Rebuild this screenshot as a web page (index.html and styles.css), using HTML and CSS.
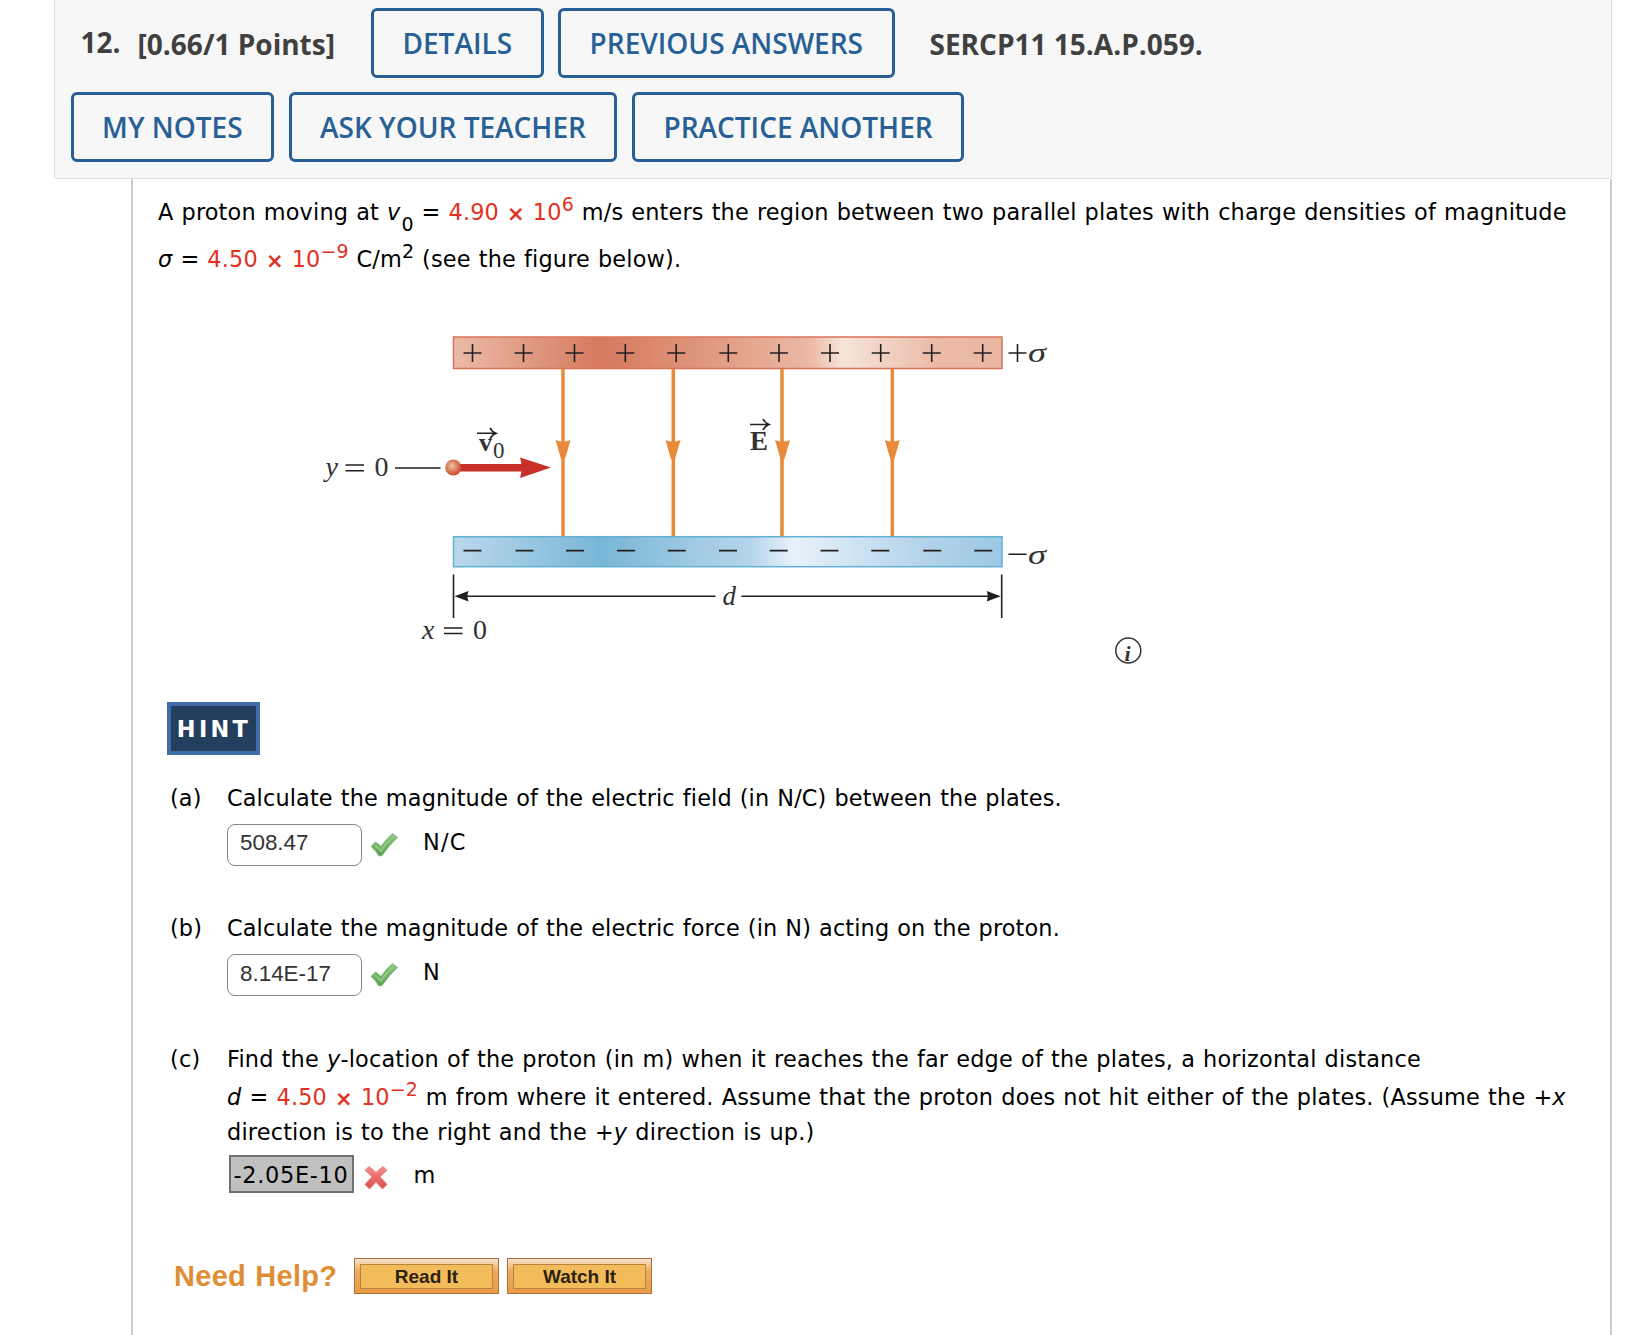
FILE: index.html
```
<!DOCTYPE html>
<html lang="en">
	<head>
		<meta charset="UTF-8">
		<meta name="viewport" content="width=device-width, initial-scale=1">
		<title>SERCP11 15.A.P.059.</title>
		<link rel="stylesheet" href="styles.css">
	</head>
	<body>
		<header class="question-header">
			<div class="header-row">
				<span class="number">12.</span>
				<span class="points">[0.66/1 Points]</span>
				<button class="btn">DETAILS</button>
				<button class="btn">PREVIOUS ANSWERS</button>
				<span class="code">SERCP11 15.A.P.059.</span>
			</div>
			<div class="header-row">
				<button class="btn">MY NOTES</button>
				<button class="btn">ASK YOUR TEACHER</button>
				<button class="btn">PRACTICE ANOTHER</button>
			</div>
		</header>

		<main class="question">
			<p class="intro">A proton moving at <i>v</i><sub>0</sub> = <span class="rand">4.90 <b>×</b> 10<sup>6</sup></span> m/s enters the region between two parallel plates with charge densities of magnitude<br>
			<i>σ</i> = <span class="rand">4.50 <b>×</b> 10<sup>−9</sup></span> C/m<sup>2</sup> (see the figure below).</p>

			<svg class="figure" viewBox="158 282 1000 388" width="1000" height="388">
				<defs>
					<linearGradient id="positive">
						<stop offset="0" stop-color="#ebbba7"/>
						<stop offset=".27" stop-color="#d6795f"/>
						<stop offset=".45" stop-color="#df967c"/>
						<stop offset=".65" stop-color="#ebb9a5"/>
						<stop offset=".71" stop-color="#f6e4db"/>
						<stop offset=".88" stop-color="#ebbba7"/>
						<stop offset="1" stop-color="#e9b7a2"/>
					</linearGradient>
					<linearGradient id="negative">
						<stop offset="0" stop-color="#bbd8ec"/>
						<stop offset=".27" stop-color="#78b6d6"/>
						<stop offset=".45" stop-color="#a2cbe4"/>
						<stop offset=".54" stop-color="#b4d4ea"/>
						<stop offset=".62" stop-color="#e8f2fa"/>
						<stop offset=".85" stop-color="#b4d4ea"/>
						<stop offset="1" stop-color="#9cc8e3"/>
					</linearGradient>
					<radialGradient id="proton" cx=".42" cy=".4" r=".6">
						<stop offset="0" stop-color="#f4c6b2"/>
						<stop offset=".5" stop-color="#df8264"/>
						<stop offset="1" stop-color="#c84b32"/>
					</radialGradient>
				</defs>

				<!-- plates -->
				<rect x="453.5" y="337" width="548.5" height="31.5" fill="url(#positive)" stroke="#d97358" stroke-width="1.5"/>
				<rect x="453.5" y="536.7" width="548.5" height="30" fill="url(#negative)" stroke="#62b0d4" stroke-width="1.5"/>
				<path class="ink" d="M463.5 353h18m-9-9v18M514.5 353h18m-9-9v18M565.5 353h18m-9-9v18M616.3 353h18m-9-9v18M667.2 353h18m-9-9v18M719.3 353h18m-9-9v18M770 353h18m-9-9v18M821 353h18m-9-9v18M871.7 353h18m-9-9v18M922.7 353h18m-9-9v18M973.7 353h18m-9-9v18M1008.5 353h18m-9-9v18"/>
				<path class="ink" d="M463.5 550.6h18M515.5 550.6h18M566 550.6h18M617 550.6h18M667.7 550.6h18M719 550.6h18M769.7 550.6h18M820.5 550.6h18M871.3 550.6h18M923.3 550.6h18M974.3 550.6h18M1008.5 554.3h18"/>

				<!-- field lines -->
				<path class="field" d="M563 369v167M673.3 369v167M782 369v167M892.3 369v167"/>
				<path fill="#e88a3a" d="M555.5 440q7.5 3 15 0l-5.5 19h-4zM665.5 440q7.5 3 15 0l-5.5 19h-4zM775 440q7.5 3 15 0l-5.5 19h-4zM884.8 440q7.5 3 15 0l-5.5 19h-4z"/>

				<!-- proton -->
				<path class="ink" d="M395 468h45.5"/>
				<path fill="#c9302c" d="M458 464h63.5l-1.5-6.5 31 10-31 10.5 1.5-6.5h-63.5z"/>
				<circle cx="453.3" cy="467.5" r="8" fill="url(#proton)"/>
				<path class="ink" d="M477 433.3h19m-6-5.5q2 4 6 5.5q-4 1.5-6 5.5"/>
				<path class="ink" d="M750 424.5h19m-6-5.5q2 4 6 5.5q-4 1.5-6 5.5"/>

				<!-- dimension line -->
				<path class="ink" d="M453.5 574.5v43.5M1001.7 574.5v43.5M458 596.3h257.5M741.5 596.3h256"/>
				<path fill="#231f20" d="M454.5 596.3l14-5.3q-2 5.3 0 10.6zM1000.7 596.3l-14-5.3q2 5.3 0 10.6z"/>

				<g class="labels">
					<text x="325.5" y="476" font-style="italic">y</text>
					<text x="374.5" y="476">0</text>
					<text x="422" y="639" font-style="italic">x</text>
					<text x="473" y="639">0</text>
					<text x="479" y="451" font-weight="bold" font-size="26">v</text>
					<text x="493" y="458" font-size="23">0</text>
					<text x="750" y="450" font-weight="bold" font-size="27">E</text>
					<text x="722.5" y="604.5" font-style="italic" font-size="27">d</text>
					<text x="1028" y="362" font-style="italic" font-size="27" textLength="18" lengthAdjust="spacingAndGlyphs">σ</text>
					<text x="1028" y="564" font-style="italic" font-size="27" textLength="18" lengthAdjust="spacingAndGlyphs">σ</text>
				</g>
				<path class="ink" d="M345.5 465h18.5M345.5 470.7h18.5M444 628h18.5M444 633.5h18.5"/>

				<!-- info -->
				<circle cx="1128.3" cy="650.5" r="12.5" fill="none" stroke="#333" stroke-width="1.5"/>
				<text class="info" x="1124.5" y="661">i</text>
			</svg>

			<button class="hint">HINT</button>

			<section class="part">
				<span>(a)</span>
				<div>
					<p>Calculate the magnitude of the electric field (in N/C) between the plates.</p>
					<div class="answer">
						<input class="box" type="text" value="508.47" aria-label="Part a">
						<svg class="mark" viewBox="0 0 28 24" width="28" height="24"><use href="#check"/></svg>
						<span class="unit">N/C</span>
					</div>
				</div>
			</section>

			<section class="part">
				<span>(b)</span>
				<div>
					<p>Calculate the magnitude of the electric force (in N) acting on the proton.</p>
					<div class="answer">
						<input class="box" type="text" value="8.14E-17" aria-label="Part b">
						<svg class="mark" viewBox="0 0 28 24" width="28" height="24"><use href="#check"/></svg>
						<span class="unit">N</span>
					</div>
				</div>
			</section>

			<section class="part part-c">
				<span>(c)</span>
				<div>
					<p>Find the <i>y</i>-location of the proton (in m) when it reaches the far edge of the plates, a horizontal distance</p>
					<p class="second"><i>d</i> = <span class="rand">4.50 <b>×</b> 10<sup>−2</sup></span> m from where it entered. Assume that the proton does not hit either of the plates. (Assume the +<i>x</i><br>
					direction is to the right and the +<i>y</i> direction is up.)</p>
					<div class="answer wrong">
						<span class="graded">-2.05E-10</span>
						<svg class="cross" viewBox="0 0 24 25" width="24" height="25">
							<defs>
								<linearGradient id="red" x2="0" y2="1">
									<stop offset="0" stop-color="#f0908d"/>
									<stop offset="1" stop-color="#e04b4a"/>
								</linearGradient>
							</defs>
							<path fill="url(#red)" stroke="#ec8482" stroke-linejoin="round" d="M5 1.5q4 2.500 7 6 3-3.500 7-6l4 4q-4 2.500-7 6.500 4 3.500 7 7.500l-4.500 4.500q-3.500-3.500-6.500-7-3 3.500-6.500 7l-4.500-4.500q3-4 7-7.500-3-4-7-6.500z"/>
						</svg>
						<span>m</span>
					</div>
				</div>
			</section>

			<div class="help">
				<span class="need">Need Help?</span>
				<button class="gold"><span>Read It</span></button>
				<button class="gold"><span>Watch It</span></button>
			</div>
		</main>

		<svg width="0" height="0" class="sprite">
			<defs>
				<linearGradient id="green" x2="0" y2="1">
					<stop offset="0" stop-color="#8cc97f"/>
					<stop offset="1" stop-color="#5a9f50"/>
				</linearGradient>
				<symbol id="check" viewBox="0 0 28 24">
					<path fill="url(#green)" stroke="#7db873" stroke-width=".8" stroke-linejoin="round" d="M1 13.5l4.5-4.5q3 1.5 5.5 4.5 5-7.5 11.500-13l5 4q-9 8.500-15.500 18-1.500 1-3.500 0-3-5.500-7.500-9z"/>
					<path fill="none" stroke="#8fcb83" stroke-width="2" d="M5 12.5q3.500 2 6 5.500 5-8 12-14"/>
				</symbol>
			</defs>
		</svg>
	</body>
</html>
```
FILE: styles.css
```
* {
	box-sizing: border-box;
}
body {
	margin: 0;
	height: 1335px;
	overflow: hidden;
	background: #fff;
	color: #000;
	font: 22.4px/34.5px "DejaVu Sans", Verdana, sans-serif;
	letter-spacing: .13px;
	word-spacing: .75px;
}
p {
	margin: 0;
	white-space: nowrap;
}
button {
	margin: 0;
	letter-spacing: 0;
	word-spacing: 0;
}

/* header */
.question-header {
	display: flex;
	flex-direction: column;
	gap: 14.5px;
	width: 1558px;
	height: 179px;
	margin-left: 54px;
	padding: 8px 0 0 15.6px;
	background: #f7f7f7;
	border: 1.5px solid #ddd;
	border-top: 0;
	border-radius: 0 0 4px 4px;
	color: #404040;
	font: bold 28px/38px "Open Sans", sans-serif;
	letter-spacing: 0;
	word-spacing: 0;
}
.header-row {
	display: flex;
	align-items: center;
	gap: 14.5px;
	height: 69.5px;
}
.btn {
	height: 69.5px;
	padding: 0 28.5px;
	background: none;
	border: 3px solid #286095;
	border-radius: 6px;
	color: #286095;
	font: 600 28px/38px "Open Sans", sans-serif;
}
.number {
	width: 40px;
	margin: 0 0 2px 10px;
}
.points {
	margin: 2px 21.5px 0 2.5px;
}
.code {
	margin: 2px 0 0 20.5px;
}

/* question body */
.question {
	width: 1481px;
	height: 1156px;
	margin-left: 131px;
	padding: 10px 0 0 25px;
	border: 2px solid #ccc;
	border-width: 0 2px;
}
.intro {
	line-height: 47px;
	letter-spacing: .16px;
}
sup,
sub {
	font-size: 19px;
	letter-spacing: 0;
	line-height: 0;
	vertical-align: 9px;
}
sub {
	margin-left: 1px;
	vertical-align: -11px;
}
.rand {
	color: #e33122;
}
.rand b {
	font-size: 21px;
	line-height: 0;
	vertical-align: -1px;
}
.figure {
	display: block;
	margin-top: -1px;
}
.ink {
	fill: none;
	stroke: #231f20;
	stroke-width: 1.6;
}
.field {
	fill: none;
	stroke: #e88a3a;
	stroke-width: 3.5;
}
.labels {
	fill: #333;
	font-family: "Liberation Serif", serif;
	font-size: 28px;
	letter-spacing: 0;
}
.info {
	fill: #333;
	font: italic bold 22px "Liberation Serif", serif;
}
.hint {
	display: block;
	width: 93px;
	height: 53px;
	margin: 32px 0 25.5px 9px;
	padding: 1px 0 0;
	background: #243f5e;
	border: 4px solid #406da8;
	color: #fff;
	font: bold 22.4px "DejaVu Sans", Verdana, sans-serif;
	letter-spacing: 3.3px;
	text-indent: 1px;
}

/* parts */
.part {
	display: grid;
	grid-template-columns: 57px 1fr;
	margin-left: 12px;
	height: 130.6px;
}
.part-c {
	letter-spacing: .18px;
}
.second {
	padding-top: 4px;
}
.answer {
	display: flex;
	align-items: flex-start;
	height: 42px;
	margin-top: 8.5px;
	line-height: 37px;
}
.unit {
	letter-spacing: 1.2px;
}
.box {
	width: 134.5px;
	height: 42px;
	padding: 0 12px 3px;
	background: #fff;
	border: 1.5px solid #85858a;
	border-radius: 8px;
	color: #333;
	font: 22.4px "Liberation Sans", Arial, sans-serif;
}
.mark {
	margin: 9px 25px 0 8.5px;
}
.wrong {
	margin-top: 5.5px;
	line-height: 40px;
}
.graded {
	width: 125px;
	height: 38px;
	margin-left: 1.5px;
	background: #c0c0c0;
	border: 2px solid #707070;
	line-height: 37px;
	letter-spacing: .7px;
	text-align: center;
}
.cross {
	margin: 10px 26px 0 10px;
}
.help {
	display: flex;
	align-items: flex-start;
	gap: 8px;
	margin: 86px 0 0 16px;
}
.need {
	width: 172px;
	color: #e08e35;
	font: bold 29px/37px "Liberation Sans", Arial, sans-serif;
	letter-spacing: .3px;
}
.gold {
	width: 145px;
	height: 36px;
	padding: 4px 5px;
	background: linear-gradient(#fbe3cf, #eeab62 35%, #e99b45);
	border: 1.5px solid #a97139;
}
.gold span {
	display: block;
	height: 25px;
	background: #f3bc5b;
	border: 1.5px solid #b6843f;
	color: #2b220f;
	font: bold 19px/23px "Liberation Sans", Arial, sans-serif;
	text-align: center;
}
.sprite {
	display: block;
}
```
